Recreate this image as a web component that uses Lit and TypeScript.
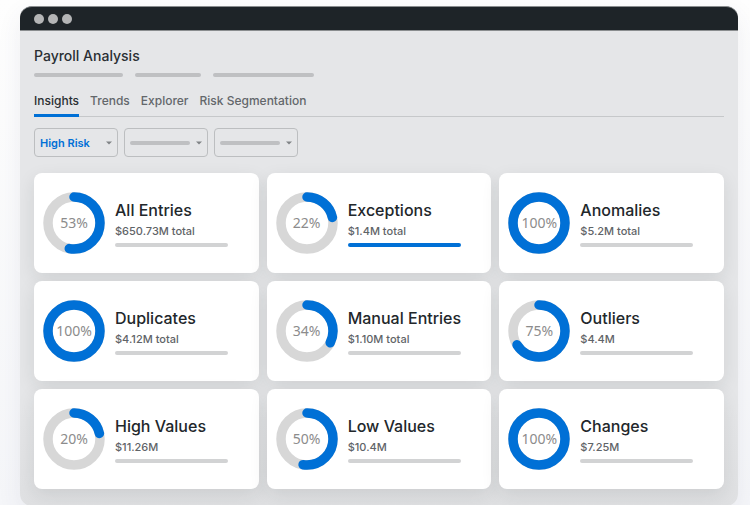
import { LitElement, html, svg, css, nothing } from "lit";
import { customElement, property, state } from "lit/decorators.js";
import { classMap } from "lit/directives/class-map.js";

interface Insight {
  title: string;
  amount: string;
  label: string;
  /** Share of the ring that is filled, 0 to 100. */
  fill: number;
  active?: boolean;
}

const INSIGHTS: Insight[] = [
  { title: "All Entries", amount: "$650.73M total", label: "53%", fill: 53 },
  { title: "Exceptions", amount: "$1.4M total", label: "22%", fill: 21.5, active: true },
  { title: "Anomalies", amount: "$5.2M total", label: "100%", fill: 100 },
  { title: "Duplicates", amount: "$4.12M total", label: "100%", fill: 100 },
  { title: "Manual Entries", amount: "$1.10M total", label: "34%", fill: 32.5 },
  { title: "Outliers", amount: "$4.4M", label: "75%", fill: 66 },
  { title: "High Values", amount: "$11.26M", label: "20%", fill: 21.5 },
  { title: "Low Values", amount: "$10.4M", label: "50%", fill: 52.5 },
  { title: "Changes", amount: "$7.25M", label: "100%", fill: 100 },
];

const TABS = ["Insights", "Trends", "Explorer", "Risk Segmentation"];

@customElement("progress-ring")
export class ProgressRing extends LitElement {
  @property({ type: Number }) fill = 0;
  @property() label = "";

  static styles = css`
    :host {
      display: grid;
      flex: none;
      place-items: center;
      width: 62px;
      height: 62px;
    }
    .ring,
    .label {
      grid-area: 1 / 1;
    }
    .ring {
      display: block;
      width: 62px;
      height: 62px;
    }
    .track,
    .arc {
      fill: none;
      stroke-width: 9.5;
    }
    .track {
      stroke: #d7d7d7;
    }
    .arc {
      stroke: #0070d6;
      stroke-linecap: round;
    }
    .label {
      font: 400 14px/20px "Noto Sans", "Open Sans", sans-serif;
      color: #8c8c8c;
    }
  `;

  render() {
    return html`
      <svg class="ring" viewBox="0 0 62 62" aria-hidden="true">
        <circle class="track" cx="31" cy="31" r="26"></circle>
        ${this.fill > 0
          ? svg`<circle class="arc" cx="31" cy="31" r="26" pathLength="100"
              stroke-dasharray="${this.fill} ${100 - this.fill}" transform="rotate(-90 31 31)"></circle>`
          : nothing}
      </svg>
      <span class="label">${this.label}</span>
    `;
  }
}

@customElement("insight-card")
export class InsightCard extends LitElement {
  @property({ attribute: false }) insight!: Insight;

  static styles = css`
    :host {
      display: flex;
      align-items: center;
      gap: 10px;
      min-width: 0;
      height: 100px;
      padding: 0 9px;
      box-sizing: border-box;
      border-radius: 8px;
      background: #fff;
      box-shadow: 0 6px 18px rgba(30, 35, 40, 0.1);
    }
    .info {
      flex: 1;
      min-width: 0;
      padding-bottom: 1px;
    }
    .title {
      margin: 0;
      font-size: 16px;
      font-weight: 500;
      line-height: 24px;
      color: #22272b;
      white-space: nowrap;
    }
    .amount {
      margin: 0;
      font-size: 11px;
      font-weight: 500;
      line-height: 18px;
      color: #5f6468;
    }
    .bar {
      max-width: 113px;
      height: 4px;
      margin-top: 3px;
      border-radius: 2px;
      background: #d2d3d4;
    }
    .bar.active {
      background: #0070d6;
    }
  `;

  render() {
    const { title, amount, label, fill, active } = this.insight;
    return html`
      <progress-ring .fill=${fill} .label=${label}></progress-ring>
      <div class="info">
        <h2 class="title">${title}</h2>
        <p class="amount">${amount}</p>
        <div class=${classMap({ bar: true, active: !!active })}></div>
      </div>
    `;
  }
}

@customElement("app-root")
export class AppRoot extends LitElement {
  @state() private tab = TABS[0];

  static styles = css`
    :host {
      display: block;
      min-height: 100vh;
      padding: 6px 12px 0 20px;
      box-sizing: border-box;
      overflow: hidden;
      background: linear-gradient(#fefefe, #f5f6f9);
      font-family: Inter, "Open Sans", sans-serif;
    }
    .window {
      border-radius: 12px;
      background: linear-gradient(#e5e6e8 80%, #dfe0e2);
      box-shadow: 0 8px 24px rgba(60, 70, 100, 0.08);
    }
    .titlebar {
      display: flex;
      align-items: center;
      gap: 4px;
      height: 25px;
      padding: 0 14px;
      box-sizing: border-box;
      border: solid #8a8d8f;
      border-width: 1px 0;
      border-radius: 12px 12px 0 0;
      background: #1e2428;
    }
    .dot {
      width: 10px;
      height: 10px;
      border-radius: 50%;
      background: #b4b5b6;
    }
    .content {
      padding: 15px 14px 17px;
    }
    .heading {
      margin: 0;
      font-size: 14px;
      font-weight: 500;
      line-height: 20px;
      color: #2a2f33;
    }
    .crumbs {
      display: flex;
      gap: 12px;
      margin-top: 7px;
    }
    .skeleton {
      height: 4px;
      border-radius: 2px;
      background: #bfc0c2;
    }
    .crumb-a {
      width: 89px;
    }
    .crumb-b {
      width: 66px;
    }
    .crumb-c {
      width: 101px;
    }
    .tabs {
      display: flex;
      gap: 11px;
      margin-top: 16px;
      box-shadow: inset 0 -1px #c6c8ca;
    }
    .tab {
      height: 24px;
      padding: 0 0 5px;
      border: 0;
      border-bottom: 3px solid transparent;
      background: none;
      font: 500 12px/16px Inter, "Open Sans", sans-serif;
      color: #63676b;
      cursor: pointer;
    }
    .tab.selected {
      border-color: #0070d6;
      color: #2a2f33;
    }
    .filters {
      display: flex;
      gap: 6px;
      margin-top: 11px;
    }
    .filter {
      display: grid;
      width: 84px;
      height: 29px;
    }
    .filter > * {
      grid-area: 1 / 1;
    }
    .select {
      appearance: none;
      width: 100%;
      padding: 0 5px;
      border: 1px solid #bcbec0;
      border-radius: 4px;
      background: none;
      font: 600 11px/16px Inter, "Open Sans", sans-serif;
      color: #0070d6;
    }
    .filter-face {
      display: flex;
      align-items: center;
      justify-content: flex-end;
      gap: 6px;
      padding: 0 6px;
      pointer-events: none;
    }
    .filter-face .skeleton {
      flex: 1;
    }
    .caret {
      width: 6px;
      height: 4px;
      fill: #808386;
    }
    .cards {
      display: grid;
      grid-template-columns: repeat(3, minmax(0, 1fr));
      gap: 8px;
      margin-top: 16px;
    }
  `;

  private renderFilter(name: string, value: string) {
    return html`
      <div class="filter">
        <select class="select" aria-label=${name}>
          <option>${value}</option>
        </select>
        <div class="filter-face">
          ${value ? nothing : html`<span class="skeleton"></span>`}
          <svg class="caret" viewBox="0 0 6 4" aria-hidden="true">
            <path d="M0 0.4h6L3 3.6z"></path>
          </svg>
        </div>
      </div>
    `;
  }

  render() {
    return html`
      <main class="window">
        <div class="titlebar">
          <span class="dot"></span><span class="dot"></span><span class="dot"></span>
        </div>
        <div class="content">
          <h1 class="heading">Payroll Analysis</h1>
          <div class="crumbs">
            <span class="skeleton crumb-a"></span>
            <span class="skeleton crumb-b"></span>
            <span class="skeleton crumb-c"></span>
          </div>
          <div class="tabs" role="tablist">
            ${TABS.map(
              (name) => html`
                <button
                  class=${classMap({ tab: true, selected: name === this.tab })}
                  role="tab"
                  aria-selected=${name === this.tab}
                  @click=${() => (this.tab = name)}
                >${name}</button>
              `
            )}
          </div>
          <div class="filters">
            ${this.renderFilter("Risk level", "High Risk")}
            ${this.renderFilter("Second filter", "")}
            ${this.renderFilter("Third filter", "")}
          </div>
          <section class="cards">
            ${INSIGHTS.map((insight) => html`<insight-card .insight=${insight}></insight-card>`)}
          </section>
        </div>
      </main>
    `;
  }
}
